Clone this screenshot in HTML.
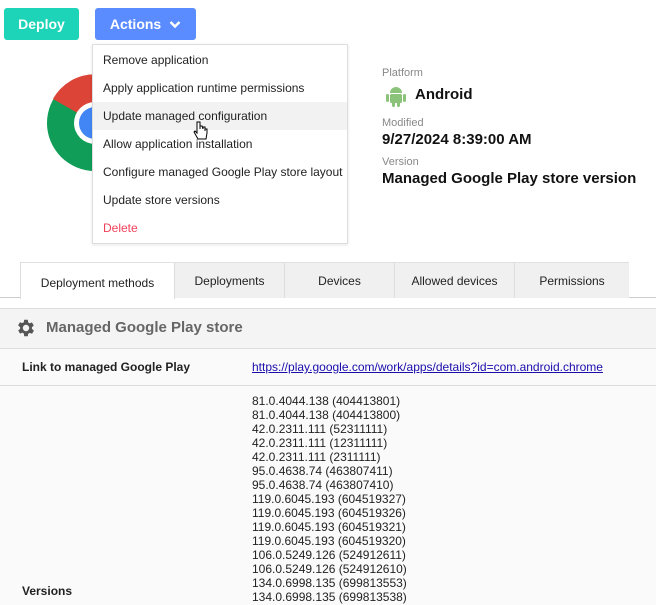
<!DOCTYPE html>
<html><head><style>
*{margin:0;padding:0;box-sizing:border-box}
body{width:656px;height:605px;overflow:hidden;background:#fff;font-family:"Liberation Sans",Arial,sans-serif;color:#222;position:relative}
.a{position:absolute}
.btn{position:absolute;top:8px;height:32px;border-radius:3px;color:#fff;font-weight:bold;font-size:14px;line-height:32px;text-align:center}
.menu{position:absolute;left:92px;top:44px;width:256px;height:200px;background:#fff;border:1px solid #ddd;box-shadow:0 1px 3px rgba(0,0,0,.1);font-size:12px}
.menu div{height:28px;line-height:28px;padding-left:10px;color:#222}
.lbl{font-size:11px;color:#888}
.val{font-size:15px;font-weight:bold;color:#111}
.tab{position:absolute;top:262px;height:36px;line-height:36px;font-size:12px;text-align:center;background:#f0f0f0;border-right:1px solid #ddd;border-top:1px solid #e0e0e0}
.v{font-size:12px;line-height:14px;color:#222}
</style></head><body>
<div class="btn" style="left:4px;width:75px;background:#1dd4b8">Deploy</div>
<div class="btn" style="left:95px;width:101px;background:#5b8cff">Actions <svg width="12" height="9" viewBox="0 0 12 9" style="margin-left:4px"><path d="M1.5 2 L6 6.5 L10.5 2" stroke="#fff" stroke-width="2.4" fill="none"/></svg></div>

<svg class="a" style="left:45px;top:73px" width="100" height="100" viewBox="0 0 100 100">
<circle cx="50" cy="50" r="48" fill="#0f9d58"/>
<path d="M50 50 L8 26 A48 48 0 0 1 92 26 Z" fill="#db4437"/>
<path d="M50 50 L92 26 A48 48 0 0 1 50 98 Z" fill="#f4c20d"/>
<circle cx="50" cy="50" r="21" fill="#fff"/>
<circle cx="50" cy="50" r="16" fill="#4285f4"/>
</svg>
<div class="a val" style="left:330px;top:131px">M</div>

<div class="menu">
<div style="margin-top:1px">Remove application</div>
<div>Apply application runtime permissions</div>
<div style="background:#f2f2f2">Update managed configuration</div>
<div>Allow application installation</div>
<div>Configure managed Google Play store layout</div>
<div>Update store versions</div>
<div style="color:#f0405a">Delete</div>
</div>
<svg class="a" style="left:193px;top:120px" width="16" height="22" viewBox="0 0 16 22"><path d="M4 2 v11 l-2-2 -1 1 4 7 h8 l1-6 v-4 h-2 v2 -1-3 h-2 v2 l-1-3 h-2 v3 V2 Z" fill="#fff" stroke="#000" stroke-width="1"/></svg>

<div class="a lbl" style="left:382px;top:67px">Platform</div>
<svg class="a" style="left:384px;top:84px" width="24" height="24" viewBox="0 0 24 24"><path d="M6 9 a6 6 0 0 1 12 0 Z" fill="#8bc37a"/><rect x="6" y="10" width="12" height="9" rx="1.5" fill="#8bc37a"/><rect x="2" y="10" width="3" height="8" rx="1.5" fill="#8bc37a"/><rect x="19" y="10" width="3" height="8" rx="1.5" fill="#8bc37a"/><rect x="8" y="17" width="3" height="6" rx="1.5" fill="#8bc37a"/><rect x="13" y="17" width="3" height="6" rx="1.5" fill="#8bc37a"/></svg>
<div class="a val" style="left:415px;top:86px">Android</div>
<div class="a lbl" style="left:382px;top:117px">Modified</div>
<div class="a val" style="left:382px;top:131px">9/27/2024 8:39:00 AM</div>
<div class="a lbl" style="left:382px;top:156px">Version</div>
<div class="a val" style="left:382px;top:170px">Managed Google Play store version</div>

<div class="a" style="left:0;top:297px;width:656px;height:1px;background:#ccc"></div>
<div class="tab" style="left:20px;width:155px;background:#fff;border-left:1px solid #ddd;height:37px;padding-top:2px;z-index:2">Deployment methods</div>
<div class="tab" style="left:175px;width:110px">Deployments</div>
<div class="tab" style="left:285px;width:110px">Devices</div>
<div class="tab" style="left:395px;width:120px">Allowed devices</div>
<div class="tab" style="left:515px;width:114px;border-right:none">Permissions</div>

<div class="a" style="left:0;top:308px;width:656px;height:297px;background:#fafafa;border-top:1px solid #ddd"></div>
<div class="a" style="left:0;top:309px;width:656px;height:40px;background:#f4f4f4;border-bottom:1px solid #ddd"></div>
<svg class="a" style="left:15px;top:317px" width="22" height="22" viewBox="0 0 24 24"><path fill="#555" d="M19.4 13a7.5 7.5 0 0 0 0-2l2.1-1.6-2-3.5-2.5 1a7.6 7.6 0 0 0-1.7-1L15 3h-4l-.4 2.7a7.6 7.6 0 0 0-1.7 1l-2.5-1-2 3.5L6.6 11a7.5 7.5 0 0 0 0 2l-2.1 1.6 2 3.5 2.5-1a7.6 7.6 0 0 0 1.7 1L11 21h4l.4-2.7a7.6 7.6 0 0 0 1.7-1l2.5 1 2-3.5ZM13 15.5a3.5 3.5 0 1 1 0-7 3.5 3.5 0 0 1 0 7Z" transform="translate(-1 0)"/></svg>
<div class="a" style="left:46px;top:319px;font-size:15px;font-weight:bold;color:#666">Managed Google Play store</div>
<div class="a" style="left:22px;top:360px;font-size:12px;font-weight:bold">Link to managed Google Play</div>
<div class="a" style="left:252px;top:360px;font-size:12px;color:#1a0dab;text-decoration:underline">https://play.google.com/work/apps/details?id=com.android.chrome</div>
<div class="a" style="left:0;top:385px;width:656px;height:1px;background:#ddd"></div>
<div class="a v" style="left:252px;top:394px">81.0.4044.138 (404413801)<br>81.0.4044.138 (404413800)<br>42.0.2311.111 (52311111)<br>42.0.2311.111 (12311111)<br>42.0.2311.111 (2311111)<br>95.0.4638.74 (463807411)<br>95.0.4638.74 (463807410)<br>119.0.6045.193 (604519327)<br>119.0.6045.193 (604519326)<br>119.0.6045.193 (604519321)<br>119.0.6045.193 (604519320)<br>106.0.5249.126 (524912611)<br>106.0.5249.126 (524912610)<br>134.0.6998.135 (699813553)<br>134.0.6998.135 (699813538)</div>
<div class="a" style="left:22px;top:584px;font-size:12px;font-weight:bold">Versions</div>
</body></html>
